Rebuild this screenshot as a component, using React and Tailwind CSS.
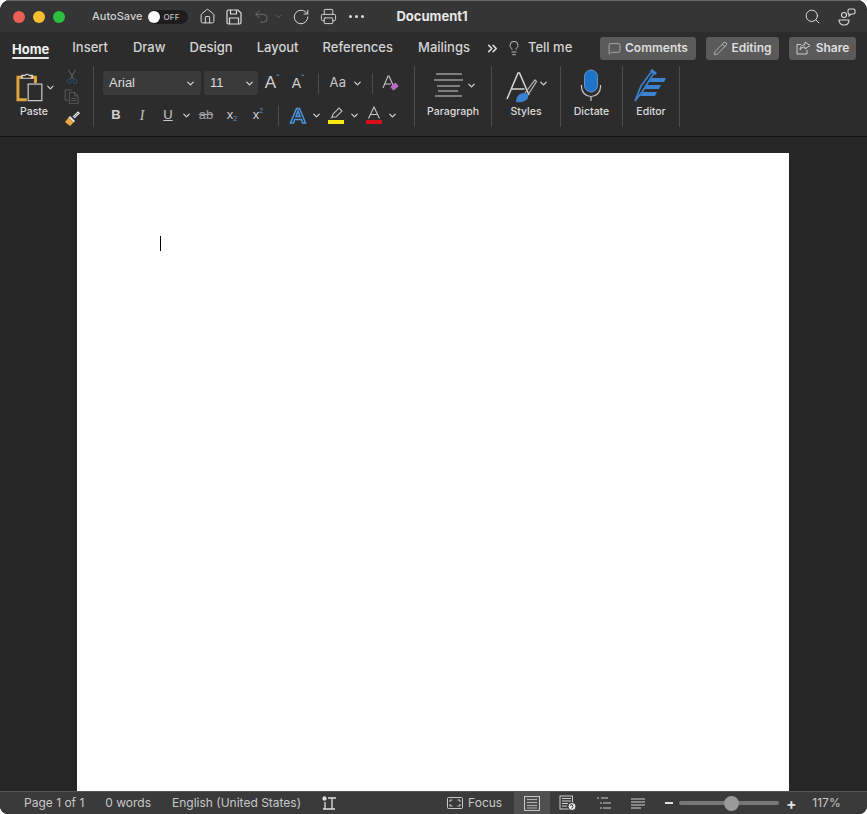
import React from 'react';
import { Home, Undo2, RotateCw, Printer, Search, Lightbulb, MessageSquare, Pencil, ChevronDown, ChevronsRight } from 'lucide-react';

const Chevron = ({ className = '' }) => (
  <ChevronDown size={11} strokeWidth={2.6} className={`text-[#d8d8d8] ${className}`} />
);

const Divider = ({ className = '' }) => <div className={`w-px bg-[#4c4c4c] ${className}`} />;

const Tab = ({ children, className = '' }) => (
  <span className={`text-[13px] font-medium text-[#d4d4d4] ${className}`}>{children}</span>
);

const Box = ({ w = 'w-[26px]', children, className = '' }) => (
  <div className={`flex h-6 shrink-0 items-center justify-center ${w} ${className}`}>{children}</div>
);

const PasteIcon = () => (
  <svg width="30" height="32" viewBox="0 0 30 32" fill="none">
    <path d="M8 6H3v23h9" stroke="#e0a53f" strokeWidth="3" />
    <path d="M16 6h5v6" stroke="#e0a53f" strokeWidth="3" />
    <path d="M7 7V4h3.5a2.4 2.4 0 0 1 4 0H18v3z" stroke="#d6d6d6" strokeWidth="1.2" />
    <rect x="13.5" y="13" width="14" height="17" stroke="#d0d0d0" strokeWidth="1.2" />
  </svg>
);

const Scissors = () => (
  <svg width="14" height="18" viewBox="0 0 14 18" fill="none">
    <path d="M3 1l6 11M11 1L5 12" stroke="#5f6062" strokeWidth="1.2" />
    <circle cx="3.5" cy="14.5" r="2.3" stroke="#2b4763" strokeWidth="1.3" />
    <circle cx="10.5" cy="14.5" r="2.3" stroke="#2b4763" strokeWidth="1.3" />
  </svg>
);

const CopyIcon = () => (
  <svg width="18" height="18" viewBox="0 0 18 18" fill="none" stroke="#5e5e5e" strokeWidth="1">
    <path d="M8 2V1H1v12h4" />
    <path d="M6 4h6l4 4v9H6z" />
    <path d="M12 4v4h4M8 11h6M8 13.5h6" />
  </svg>
);

const BrushIcon = () => (
  <svg width="16" height="16" viewBox="0 0 16 16" fill="none">
    <path d="M9 6l5-5 1.2 1.2-5 5" stroke="#e8e8e8" strokeWidth="1.2" />
    <path d="M6 5l5 5-1.5 1.5L4.5 6.5z" fill="#e8e8e8" />
    <path d="M4.5 6.5l5 5L6 15 1 11z" fill="#e7a83f" />
  </svg>
);

const ClearFormat = () => (
  <svg width="18" height="18" viewBox="0 0 18 18" fill="none">
    <path d="M1 14L6 2h1l4 9M3 10h6" stroke="#c8c8c8" strokeWidth="1.1" />
    <rect x="9" y="10" width="7" height="5" rx="1" transform="rotate(-40 12.5 12.5)" fill="#b56cc0" />
  </svg>
);

const TextEffects = () => (
  <svg width="18" height="17" viewBox="0 0 18 17" fill="none" stroke="#4b97de" strokeWidth="1.5">
    <path d="M1.5 16L7.5 1.5h3L16.5 16h-3l-1.2-3.5H5.7L4.5 16z" />
    <path d="M7 9.5L9 4l2 5.5z" />
  </svg>
);

const Highlighter = () => (
  <svg width="18" height="18" viewBox="0 0 18 18" fill="none">
    <path d="M5 11l1-3 6-6 3 3-6 6z" stroke="#bcbcbc" strokeWidth="1.1" />
    <path d="M3 12.5l2-1.5 1 1z" fill="#bcbcbc" />
    <rect x="1" y="14" width="16" height="4" fill="#f5e90f" />
  </svg>
);

const FontColor = () => (
  <svg width="18" height="18" viewBox="0 0 18 18" fill="none">
    <path d="M3.5 12.5L9 1l5.5 11.5M5.5 8.5h7" stroke="#c4c4c4" strokeWidth="1.1" />
    <rect x="1" y="14" width="16" height="4" fill="#d8101c" />
  </svg>
);

const ParagraphIcon = () => (
  <svg width="30" height="24" viewBox="0 0 30 24" stroke="#cfcfcf" strokeWidth="1.2">
    <path d="M2 1h26M0 7h29M3 13h23M4 18h20M1 23h27" />
  </svg>
);

const StylesIcon = () => (
  <svg width="32" height="32" viewBox="0 0 32 32" fill="none">
    <path d="M1 28L12 2h1.5L23 24M5.5 18h13" stroke="#d8d8d8" strokeWidth="1.5" />
    <path d="M19 22L29 9l1.5 1.5-9 14" stroke="#b8b8b8" strokeWidth="1.2" />
    <path d="M10 31c0-5 3-9 8-9 3 0 5 2 4 4.500-1 3.500-7 5.500-12 4.500z" fill="#3a82d0" />
  </svg>
);

const MicIcon = () => (
  <svg width="22" height="32" viewBox="0 0 22 32" fill="none">
    <rect x="4.500" y="1" width="13" height="22" rx="6.500" fill="#1f73c9" stroke="#6da7de" strokeWidth="0.800" />
    <path d="M1.500 16v2a9.500 9.500 0 0 0 19 0v-2M11 27.500V32" stroke="#c8c8c8" strokeWidth="1.2" />
  </svg>
);

const EditorIcon = () => (
  <svg width="34" height="34" viewBox="0 0 34 34" fill="none">
    <path d="M1 33l6-15L18 3l2 2L8 24z" stroke="#3b82d0" strokeWidth="1.600" />
    <path d="M18 1l5 4-2 2-5-4z" fill="#3b82d0" />
    <path d="M18 10h14l-2 4H15zM13 17h14l-2 4H10zM9 24h14l-2 4H6z" fill="#3b82d0" />
  </svg>
);

const SaveIcon = () => (
  <svg width="16" height="16" viewBox="0 0 16 16" fill="none" stroke="#dcdcdc" strokeWidth="1.200">
    <path d="M1 2.500A1.500 1.500 0 0 1 2.500 1h9.500L15 4v9.500a1.500 1.500 0 0 1-1.500 1.500h-11A1.500 1.500 0 0 1 1 13.500z" />
    <path d="M4.500 1v4h6V1M3.500 15V9h9v6" />
  </svg>
);

const ContactIcon = () => (
  <svg width="18" height="18" viewBox="0 0 18 18" fill="none" stroke="#dcdcdc" strokeWidth="1.100">
    <circle cx="6" cy="7" r="2.500" />
    <path d="M1 12h10c0 3-2 5-5 5s-5-2-5-5z" />
    <path d="M10 2.500A1.500 1.500 0 0 1 11.500 1h4A1.500 1.500 0 0 1 17 2.500v2A1.500 1.500 0 0 1 15.500 6H13l-2 2V6a1.500 1.500 0 0 1-1-1.500z" />
  </svg>
);

const ShareIcon = () => (
  <svg width="15" height="14" viewBox="0 0 15 14" fill="none" stroke="#cdcdcd" strokeWidth="1">
    <path d="M5 3.500H1v9.500h10V9" />
    <path d="M9 1l5 3.500-5 3.500V6C6.500 6 5 7 4 9c0-3 1.500-5 5-5.500z" />
  </svg>
);

const WebView = () => (
  <svg width="18" height="16" viewBox="0 0 18 16" fill="none">
    <rect x="1" y="1" width="12.500" height="13" stroke="#cfcfcf" />
    <path d="M3 3.500h9M3 6h9M3 8.500h6M3 11h5" stroke="#cfcfcf" />
    <circle cx="13" cy="11.500" r="4" fill="#e8e8e8" stroke="#3a3a3a" />
    <path d="M11 10.500l2-1 1 2-1.500 2" stroke="#3a3a3a" />
  </svg>
);

const PageView = () => (
  <svg width="16" height="15" viewBox="0 0 16 15" fill="none">
    <rect x="0.500" y="0.500" width="15" height="14" stroke="#c8c8c8" />
    <path d="M3 3.500h10M3 6.500h10M3 9.500h10M3 12h10" stroke="#c8c8c8" strokeWidth="0.800" />
  </svg>
);

const OutlineIcon = () => (
  <svg width="16" height="12" viewBox="0 0 16 12" stroke="#cccccc" strokeWidth="1.200">
    <path d="M1 1h2M5 1h7M4 6h2M7 6h8M4 11h2M7 11h8" />
  </svg>
);

const DraftIcon = () => (
  <svg width="14" height="11" viewBox="0 0 14 11" stroke="#d0d0d0" strokeWidth="1.200">
    <path d="M0 1h14M0 4h14M0 7h14M0 10h10" />
  </svg>
);

const FocusIcon = () => (
  <svg width="16" height="12" viewBox="0 0 16 12" fill="none" stroke="#c8c8c8">
    <rect x="0.500" y="0.500" width="15" height="11" rx="1" />
    <path d="M3 5V3h2.500M13 5V3h-2.500M3 7v2h2.500M13 7v2h-2.500" />
  </svg>
);

const TrackIcon = () => (
  <svg width="15" height="15" viewBox="0 0 15 15" fill="none" stroke="#e0e0e0" strokeWidth="1.300">
    <circle cx="2.500" cy="2.500" r="1.500" fill="#e0e0e0" />
    <path d="M6 2h8M10 2v11M1 13h12M3 6v7" />
  </svg>
);

const App = () => {
  return (
    <div className="flex h-[814px] w-[867px] flex-col overflow-hidden rounded-t-[10px] rounded-b-[8px] bg-[#262626] font-['Inter',sans-serif]">
      {/* Title bar */}
      <div className="flex h-8 shrink-0 items-center border-t border-[#6a6a6a] bg-[#353535] pl-[13px] pr-[11px]">
        <div className="flex gap-[8px]">
          <span className="h-3 w-3 rounded-full bg-[#ec5f57]" />
          <span className="h-3 w-3 rounded-full bg-[#f5bd2f]" />
          <span className="h-3 w-3 rounded-full bg-[#29c13f]" />
        </div>
        <span className="ml-[27px] text-[11px] font-medium text-[#d0d0d0]">AutoSave</span>
        <div className="ml-[6px] flex h-[14px] w-[40px] items-center gap-[3px] rounded-full bg-[#1d1d1d]">
          <span className="h-3 w-3 rounded-full bg-white" />
          <span className="text-[8px] font-medium tracking-wide text-[#c4c4c4]">OFF</span>
        </div>
        <Home size={17} strokeWidth={1.4} className="ml-[11px] text-[#dcdcdc]" />
        <div className="ml-[10px]"><SaveIcon /></div>
        <Undo2 size={17} strokeWidth={1.3} className="ml-[11px] text-[#707070]" />
        <ChevronDown size={9} strokeWidth={2} className="ml-[4px] text-[#707070]" />
        <RotateCw size={18} strokeWidth={1.3} className="ml-[9px] text-[#dcdcdc]" />
        <Printer size={17} strokeWidth={1.3} className="ml-[10px] text-[#dcdcdc]" />
        <div className="ml-[12px] flex gap-[3px]">
          <span className="h-[3px] w-[3px] rounded-full bg-[#dcdcdc]" />
          <span className="h-[3px] w-[3px] rounded-full bg-[#dcdcdc]" />
          <span className="h-[3px] w-[3px] rounded-full bg-[#dcdcdc]" />
        </div>
        <span className="ml-[32px] text-[13px] font-bold text-[#e8e8e8]">Document1</span>
        <div className="ml-auto flex items-center gap-[17px]">
          <Search size={17} strokeWidth={1.4} className="text-[#dcdcdc]" />
          <ContactIcon />
        </div>
      </div>

      {/* Tabs */}
      <div className="flex h-[32px] shrink-0 items-center bg-[#2c2c2c] pl-[12px] pr-[11px]">
        <div className="relative">
          <span className="text-[13px] font-bold text-[#f0f0f0]">Home</span>
          <div className="absolute left-0 right-0 top-[21px] h-[2px] rounded bg-[#e8e8e8]" />
        </div>
        <Tab className="ml-[23px]">Insert</Tab>
        <Tab className="ml-[25px]">Draw</Tab>
        <Tab className="ml-[24px]">Design</Tab>
        <Tab className="ml-[24px]">Layout</Tab>
        <Tab className="ml-[24px]">References</Tab>
        <Tab className="ml-[25px]">Mailings</Tab>
        <ChevronsRight size={15} strokeWidth={2.4} className="ml-[15px] text-[#e0e0e0]" />
        <Lightbulb size={16} strokeWidth={1.3} className="ml-[6px] text-[#d4d4d4]" />
        <Tab className="ml-[6px]">Tell me</Tab>
        <div className="ml-auto flex gap-[10px]">
          <div className="flex h-[23px] w-[96px] items-center justify-center gap-[4px] rounded-[3px] bg-[#5a5a5a]">
            <MessageSquare size={13} strokeWidth={1.2} className="text-[#d0d0d0]" />
            <span className="text-[12px] font-semibold text-[#dedede]">Comments</span>
          </div>
          <div className="flex h-[23px] w-[73px] items-center justify-center gap-[3px] rounded-[3px] bg-[#5a5a5a]">
            <Pencil size={15} strokeWidth={1.2} className="text-[#d0d0d0]" />
            <span className="text-[12px] font-semibold text-[#dedede]">Editing</span>
          </div>
          <div className="flex h-[23px] w-[67px] items-center justify-center gap-[5px] rounded-[3px] bg-[#5a5a5a]">
            <ShareIcon />
            <span className="text-[12px] font-semibold text-[#dedede]">Share</span>
          </div>
        </div>
      </div>

      {/* Ribbon */}
      <div className="flex h-[73px] shrink-0 items-stretch border-b border-[#111111] bg-[#2c2c2c] pb-[9px] pt-[2px]">
        {/* Clipboard */}
        <div className="flex w-[93px] shrink-0">
          <div className="ml-[15px] flex w-[41px] flex-col">
            <div className="mt-[3px] flex h-[36px] items-center">
              <PasteIcon />
              <Chevron className="ml-[1px]" />
            </div>
            <span className="-mt-[1px] w-[38px] text-center text-[10.5px] font-medium text-[#dcdcdc]">Paste</span>
          </div>
          <div className="ml-[7px] flex flex-col items-center gap-[4px] pt-[3px]">
            <Scissors />
            <CopyIcon />
            <div className="mt-[3px]"><BrushIcon /></div>
          </div>
        </div>
        <Divider />

        {/* Font */}
        <div className="flex w-[320px] shrink-0 flex-col pl-[9px] pt-[5px]">
          <div className="flex items-center">
            <div className="flex h-6 w-[98px] items-center justify-between rounded-[3px] bg-[#3a3a3a] pl-[6px] pr-[5px]">
              <span className="font-['Liberation_Sans',sans-serif] text-[13px] text-[#dcdcdc]">Arial</span>
              <Chevron />
            </div>
            <div className="ml-[3px] flex h-6 w-[54px] items-center justify-between rounded-[3px] bg-[#3a3a3a] pl-[6px] pr-[3px]">
              <span className="font-['Liberation_Sans',sans-serif] text-[13px] text-[#dcdcdc]">11</span>
              <Chevron />
            </div>
            <Box className="ml-[1px] font-['Liberation_Sans',sans-serif] text-[17px] text-[#cfcfcf]">
              A<span className="-mt-2 text-[9px] text-[#6ea3d8]">ˆ</span>
            </Box>
            <Box className="font-['Liberation_Sans',sans-serif] text-[14px] text-[#cfcfcf]">
              A<span className="-mt-2 text-[9px] text-[#6ea3d8]">ˇ</span>
            </Box>
            <Divider className="ml-[7px] h-[21px]" />
            <Box w="w-[30px]" className="ml-[4px] text-[13px] tracking-wide text-[#c8c8c8]">Aa</Box>
            <Chevron className="-ml-[1px]" />
            <Divider className="ml-[9px] h-[21px]" />
            <Box className="ml-[5px]"><ClearFormat /></Box>
          </div>
          <div className="mt-[8px] flex items-center">
            <Box className="font-['Liberation_Sans',sans-serif] text-[13px] font-bold text-[#d0d0d0]">B</Box>
            <Box className="font-['Liberation_Serif',serif] text-[14px] italic text-[#c4c4c4]">I</Box>
            <Box className="font-['Liberation_Sans',sans-serif] text-[13px] text-[#c8c8c8] underline">U</Box>
            <Chevron />
            <Box className="ml-[1px] font-['Liberation_Sans',sans-serif] text-[13px] text-[#a0a0a0] line-through">ab</Box>
            <Box className="font-['Liberation_Sans',sans-serif] text-[13px] text-[#d0d0d0]">
              x<span className="mt-2 text-[7px] text-[#5d93cc]">2</span>
            </Box>
            <Box className="font-['Liberation_Sans',sans-serif] text-[13px] text-[#d0d0d0]">
              x<span className="-mt-2 text-[7px] text-[#5d93cc]">2</span>
            </Box>
            <Divider className="ml-[7px] h-[21px]" />
            <Box className="ml-[6px]"><TextEffects /></Box>
            <Chevron />
            <Box className="ml-[1px]"><Highlighter /></Box>
            <Chevron />
            <Box className="ml-[1px]"><FontColor /></Box>
            <Chevron />
          </div>
        </div>
        <Divider />

        {/* Paragraph */}
        <div className="flex w-[76px] shrink-0 flex-col items-center">
          <div className="flex h-[38px] items-center pl-[5px]">
            <ParagraphIcon />
            <Chevron className="ml-[2px]" />
          </div>
          <span className="text-[10.5px] font-medium text-[#dcdcdc]">Paragraph</span>
        </div>
        <Divider />

        {/* Styles */}
        <div className="flex w-[68px] shrink-0 flex-col items-center">
          <div className="flex h-[38px] items-center pl-[3px] pt-[3px]">
            <StylesIcon />
            <Chevron className="-mt-[6px]" />
          </div>
          <span className="text-[10.5px] font-medium text-[#dcdcdc]">Styles</span>
        </div>
        <Divider />

        {/* Dictate */}
        <div className="flex w-[61px] shrink-0 flex-col items-center">
          <div className="flex h-[38px] items-center pr-[2px]"><MicIcon /></div>
          <span className="text-[10.5px] font-medium text-[#dcdcdc]">Dictate</span>
        </div>
        <Divider />

        {/* Editor */}
        <div className="flex w-[56px] shrink-0 flex-col items-center">
          <div className="flex h-[38px] items-center"><EditorIcon /></div>
          <span className="text-[10.5px] font-medium text-[#dcdcdc]">Editor</span>
        </div>
        <Divider />
      </div>

      {/* Document canvas */}
      <div className="flex min-h-0 flex-1 justify-center bg-[#262626] pt-[16px]">
        <div className="-ml-[1px] h-full w-[712px] bg-white pl-[83px] pt-[83px]">
          <div className="h-[15px] w-px bg-black" />
        </div>
      </div>

      {/* Status bar */}
      <div className="flex h-[23px] shrink-0 items-center border-t border-[#555555] bg-[#3a3a3a] pl-[24px] text-[12px] text-[#c8c8c8]">
        <span>Page 1 of 1</span>
        <span className="ml-[21px]">0 words</span>
        <span className="ml-[21px]">English (United States)</span>
        <div className="ml-[21px]"><TrackIcon /></div>
        <div className="ml-[110px]"><FocusIcon /></div>
        <span className="ml-[5px]">Focus</span>
        <div className="ml-[12px] flex h-full w-[36px] items-center justify-center bg-[#4f4f4f]"><PageView /></div>
        <div className="ml-[9px]"><WebView /></div>
        <div className="ml-[19px]"><OutlineIcon /></div>
        <div className="ml-[19px]"><DraftIcon /></div>
        <div className="ml-[20px] h-[2px] w-[8px] bg-[#e0e0e0]" />
        <div className="relative ml-[6px] h-[4px] w-[100px] rounded-full bg-[#777777]">
          <div className="absolute left-[45px] top-[-5.5px] h-[15px] w-[15px] rounded-full bg-[#9a9a9a]" />
        </div>
        <span className="ml-[7px] text-[15px] font-bold leading-none text-[#e4e4e4]">+</span>
        <span className="ml-[16px]">117%</span>
      </div>
    </div>
  );
};

export default App;
